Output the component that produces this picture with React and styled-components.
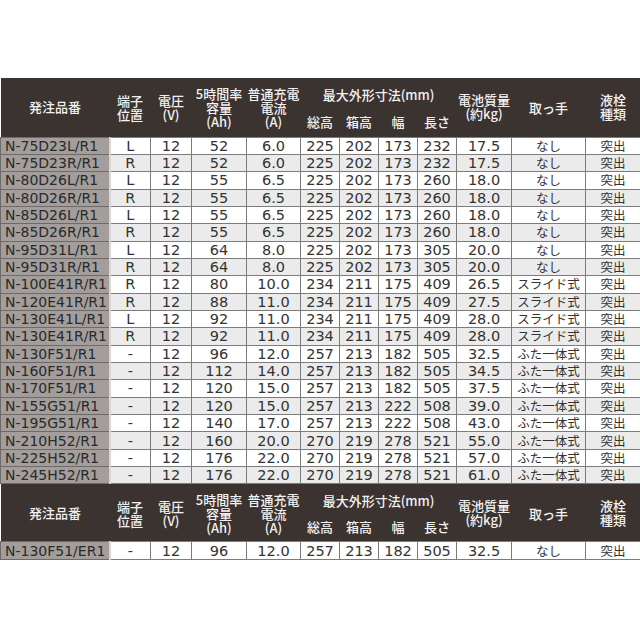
import React from 'react';
import styled, { createGlobalStyle } from 'styled-components';

const Global = createGlobalStyle`
  html, body { margin: 0; padding: 0; background: #ffffff; }
  body { font-family: "DejaVu Sans", "Noto Sans CJK JP", sans-serif; }
`;

const Page = styled.div`
  width: 640px;
  height: 640px;
  padding-top: 78px;
  box-sizing: border-box;
  overflow: hidden;
`;

const Table = styled.table`
  width: 640px;
  border-collapse: collapse;
  table-layout: fixed;
`;

const HeadRow = styled.tr`
  height: ${(p) => p.$h}px;
`;

const Th = styled.th`
  background: #3a3330;
  color: #f3f1f0;
  font-family: "Noto Sans CJK JP", sans-serif;
  font-weight: 500;
  font-size: 13px;
  line-height: 14px;
  padding: 0;
  padding-top: ${(p) => p.$pt || 0}px;
  text-align: center;
  vertical-align: middle;
  white-space: nowrap;
  border: none;
`;

const BodyRow = styled.tr`
  height: 17.35px;
`;

const Td = styled.td`
  height: 16px;
  padding: 0;
  border: 1px solid #7c7c7c;
  background: ${(p) => (p.$shade ? '#ebebeb' : '#ffffff')};
  color: #333333;
  text-align: center;
  vertical-align: middle;
  white-space: nowrap;
  overflow: hidden;
  font-family: ${(p) => (p.$jp ? '"Noto Sans CJK JP", sans-serif' : '"DejaVu Sans", sans-serif')};
  font-weight: 400;
  font-size: ${(p) => (p.$jp ? '12.5px' : '14.5px')};
  line-height: 16px;
`;

const PartTd = styled.td`
  height: 16px;
  padding: 0 0 0 4px;
  border: 1px solid #6f6967;
  border-right: 2px solid #d9d6d5;
  background: #a39e9c;
  color: #2a2a2a;
  text-align: left;
  vertical-align: middle;
  white-space: nowrap;
  overflow: hidden;
  font-family: "DejaVu Sans", sans-serif;
  font-weight: 400;
  font-size: 14px;
  line-height: 16px;
`;

const widths = [109, 41, 41, 55, 54, 39, 39, 39, 39, 55, 74, 55];

const rows = [
  ['N-75D23L/R1', 'L', '12', '52', '6.0', '225', '202', '173', '232', '17.5', 'なし', '突出'],
  ['N-75D23R/R1', 'R', '12', '52', '6.0', '225', '202', '173', '232', '17.5', 'なし', '突出'],
  ['N-80D26L/R1', 'L', '12', '55', '6.5', '225', '202', '173', '260', '18.0', 'なし', '突出'],
  ['N-80D26R/R1', 'R', '12', '55', '6.5', '225', '202', '173', '260', '18.0', 'なし', '突出'],
  ['N-85D26L/R1', 'L', '12', '55', '6.5', '225', '202', '173', '260', '18.0', 'なし', '突出'],
  ['N-85D26R/R1', 'R', '12', '55', '6.5', '225', '202', '173', '260', '18.0', 'なし', '突出'],
  ['N-95D31L/R1', 'L', '12', '64', '8.0', '225', '202', '173', '305', '20.0', 'なし', '突出'],
  ['N-95D31R/R1', 'R', '12', '64', '8.0', '225', '202', '173', '305', '20.0', 'なし', '突出'],
  ['N-100E41R/R1', 'R', '12', '80', '10.0', '234', '211', '175', '409', '26.5', 'スライド式', '突出'],
  ['N-120E41R/R1', 'R', '12', '88', '11.0', '234', '211', '175', '409', '27.5', 'スライド式', '突出'],
  ['N-130E41L/R1', 'L', '12', '92', '11.0', '234', '211', '175', '409', '28.0', 'スライド式', '突出'],
  ['N-130E41R/R1', 'R', '12', '92', '11.0', '234', '211', '175', '409', '28.0', 'スライド式', '突出'],
  ['N-130F51/R1', '-', '12', '96', '12.0', '257', '213', '182', '505', '32.5', 'ふた一体式', '突出'],
  ['N-160F51/R1', '-', '12', '112', '14.0', '257', '213', '182', '505', '34.5', 'ふた一体式', '突出'],
  ['N-170F51/R1', '-', '12', '120', '15.0', '257', '213', '182', '505', '37.5', 'ふた一体式', '突出'],
  ['N-155G51/R1', '-', '12', '120', '15.0', '257', '213', '222', '508', '39.0', 'ふた一体式', '突出'],
  ['N-195G51/R1', '-', '12', '140', '17.0', '257', '213', '222', '508', '43.0', 'ふた一体式', '突出'],
  ['N-210H52/R1', '-', '12', '160', '20.0', '270', '219', '278', '521', '55.0', 'ふた一体式', '突出'],
  ['N-225H52/R1', '-', '12', '176', '22.0', '270', '219', '278', '521', '57.0', 'ふた一体式', '突出'],
  ['N-245H52/R1', '-', '12', '176', '22.0', '270', '219', '278', '521', '61.0', 'ふた一体式', '突出'],
];

const extra = [
  ['N-130F51/ER1', '-', '12', '96', '12.0', '257', '213', '182', '505', '32.5', 'なし', '突出'],
];

const Lines = ({ items }) =>
  items.map((t, i) => (
    <React.Fragment key={i}>
      {i > 0 && <br />}
      {t}
    </React.Fragment>
  ));

function HeaderRows({ total }) {
  const top = Math.round(total / 2);
  return (
    <>
      <HeadRow $h={top}>
        <Th rowSpan={2}>発注品番</Th>
        <Th rowSpan={2} $pt={2}><Lines items={['端子', '位置']} /></Th>
        <Th rowSpan={2} $pt={2}><Lines items={['電圧', '(V)']} /></Th>
        <Th rowSpan={2} $pt={2}><Lines items={['5時間率', '容量', '(Ah)']} /></Th>
        <Th rowSpan={2} $pt={2}><Lines items={['普通充電', '電流', '(A)']} /></Th>
        <Th colSpan={4} $pt={4}>最大外形寸法(mm)</Th>
        <Th rowSpan={2}><Lines items={['電池質量', '(約kg)']} /></Th>
        <Th rowSpan={2} $pt={2}>取っ手</Th>
        <Th rowSpan={2}><Lines items={['液栓', '種類']} /></Th>
      </HeadRow>
      <HeadRow $h={total - top}>
        <Th>総高</Th>
        <Th>箱高</Th>
        <Th>幅</Th>
        <Th>長さ</Th>
      </HeadRow>
    </>
  );
}

function DataRow({ row, shade }) {
  const [part, ...cells] = row;
  return (
    <BodyRow>
      <PartTd>{part}</PartTd>
      {cells.map((c, i) => (
        <Td key={i} $shade={shade} $jp={i >= 9}>
          {c}
        </Td>
      ))}
    </BodyRow>
  );
}

export default function App() {
  return (
    <>
      <Global />
      <Page>
        <Table>
          <colgroup>
            {widths.map((w, i) => (
              <col key={i} style={{ width: w }} />
            ))}
          </colgroup>
          <thead>
            <HeaderRows total={59} />
          </thead>
          <tbody>
            {rows.map((r, i) => (
              <DataRow key={r[0]} row={r} shade={i % 2 === 1} />
            ))}
          </tbody>
          <tbody>
            <HeaderRows total={58} />
            {extra.map((r) => (
              <DataRow key={r[0]} row={r} shade={false} />
            ))}
          </tbody>
        </Table>
      </Page>
    </>
  );
}
